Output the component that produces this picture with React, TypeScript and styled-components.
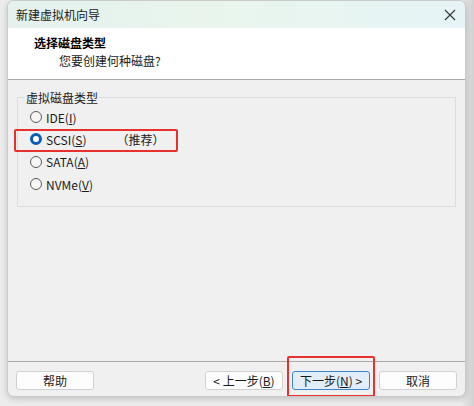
import React from 'react';
import styled, { createGlobalStyle } from 'styled-components';

const GlobalStyle = createGlobalStyle`
	html, body {
		margin: 0;
		padding: 0;
	}
	body {
		width: 474px;
		height: 406px;
		overflow: hidden;
		background: linear-gradient(90deg, #ececec 0%, #ececec 97%, #d2d2d2 100%);
		font-family: "Noto Sans CJK SC", "Noto Sans", sans-serif;
		font-size: 12px;
		color: #1a1a1a;
	}
`;

const Page = styled.div`
	padding-left: 7px;
	height: 406px;
`;

const Dialog = styled.div`
	position: relative;
	width: 459px;
	height: 397px;
	display: flex;
	flex-direction: column;
	border: 1px solid #c9c9c9;
	border-radius: 7px;
	overflow: hidden;
	background: #f0f0f0;
	box-shadow: 0 2px 6px rgba(0, 0, 0, 0.18);
	box-sizing: border-box;
`;

const TitleBar = styled.div`
	height: 27px;
	display: flex;
	align-items: center;
	justify-content: space-between;
	padding: 0 9px 0 8px;
	background: linear-gradient(90deg, #e4f1ee 0%, #e9f5ec 45%, #e6f4f7 100%);
`;

const Title = styled.span`
	font-size: 12px;
	color: #202020;
`;

const Header = styled.div`
	height: 52px;
	background: #ffffff;
	border-bottom: 1px solid #a8a8a8;
	padding: 6px 0 0 26px;
	box-sizing: border-box;
`;

const HeaderTitle = styled.div`
	font-weight: 700;
	font-size: 12px;
	line-height: 18px;
	color: #000;
`;

const HeaderSub = styled.div`
	padding-left: 25px;
	font-size: 12px;
	line-height: 18px;
	color: #1a1a1a;
`;

const Body = styled.div`
	flex: 1;
	padding: 9px 9px 0 9px;
`;

const GroupBox = styled.fieldset`
	margin: 0;
	height: 118px;
	border: 1px solid #dcdcdc;
	border-radius: 0;
	padding: 1px 0 0 12px;
	box-sizing: border-box;
	display: flex;
	flex-direction: column;
	gap: 2.4px;
`;

const Legend = styled.legend`
	padding: 0 1px;
	margin-left: -5px;
	font-size: 12px;
	color: #1a1a1a;
`;

const RadioRow = styled.label`
	display: flex;
	align-items: center;
	height: 20px;
	gap: 4px;
	font-size: 12px;
	color: #1a1a1a;
`;

const RadioCircle = styled.span<{ $checked?: boolean }>`
	width: 12px;
	height: 12px;
	border-radius: 50%;
	box-sizing: border-box;
	background: ${p => (p.$checked ? '#ffffff' : '#f6f6f6')};
	border: ${p => (p.$checked ? '3.5px solid #0a5fb4' : '1px solid #5c5c5c')};
`;

const Note = styled.span`
	margin-left: 26px;
`;

const Footer = styled.div`
	height: 35px;
	border-top: 1px solid #a8a8a8;
	display: flex;
	align-items: flex-start;
	padding: 9px 8px 0 8px;
	gap: 9px;
	box-sizing: border-box;
`;

const Spacer = styled.div`
	flex: 1;
`;

const Button = styled.button<{ $primary?: boolean }>`
	width: 78px;
	height: 19px;
	padding: 0;
	border-radius: 3px;
	font-family: "Noto Sans CJK SC", "Noto Sans", sans-serif;
	font-size: 12px;
	color: #1a1a1a;
	background: ${p => (p.$primary ? '#e1edf8' : '#fdfdfd')};
	border: 1px solid ${p => (p.$primary ? '#3b85cc' : '#d0d0d0')};
	display: flex;
	align-items: center;
	justify-content: center;
	line-height: 1;
`;

const Highlight = styled.div<{ $x: number; $y: number; $w: number; $h: number }>`
	position: absolute;
	left: ${p => p.$x}px;
	top: ${p => p.$y}px;
	width: ${p => p.$w}px;
	height: ${p => p.$h}px;
	border: 2px solid #e8302c;
	border-radius: 2px;
	box-sizing: border-box;
	pointer-events: none;
`;

const CloseIcon = () => (
	<svg width="12" height="12" viewBox="0 0 12 12">
		<path d="M1 1 L11 11 M11 1 L1 11" stroke="#333" strokeWidth="1.1" fill="none" />
	</svg>
);

const options = [
	{ label: 'IDE(', key: 'I', checked: false },
	{ label: 'SCSI(', key: 'S', checked: true, note: '（推荐）' },
	{ label: 'SATA(', key: 'A', checked: false },
	{ label: 'NVMe(', key: 'V', checked: false },
];

export default function App() {
	return (
		<Page>
			<GlobalStyle />
			<Dialog>
				<TitleBar>
					<Title>新建虚拟机向导</Title>
					<CloseIcon />
				</TitleBar>
				<Header>
					<HeaderTitle>选择磁盘类型</HeaderTitle>
					<HeaderSub>您要创建何种磁盘?</HeaderSub>
				</Header>
				<Body>
					<GroupBox>
						<Legend>虚拟磁盘类型</Legend>
						{options.map(o => (
							<RadioRow key={o.key}>
								<RadioCircle $checked={o.checked} />
								<span>
									{o.label}<u>{o.key}</u>)
								</span>
								{o.note && <Note>{o.note}</Note>}
							</RadioRow>
						))}
					</GroupBox>
				</Body>
				<Footer>
					<Button>帮助</Button>
					<Spacer />
					<Button>&lt; 上一步(<u>B</u>)</Button>
					<Button $primary>下一步(<u>N</u>) &gt;</Button>
					<Button>取消</Button>
				</Footer>
				<Highlight $x={6} $y={128} $w={164} $h={23} />
				<Highlight $x={279} $y={355} $w={88} $h={41} />
			</Dialog>
		</Page>
	);
}
